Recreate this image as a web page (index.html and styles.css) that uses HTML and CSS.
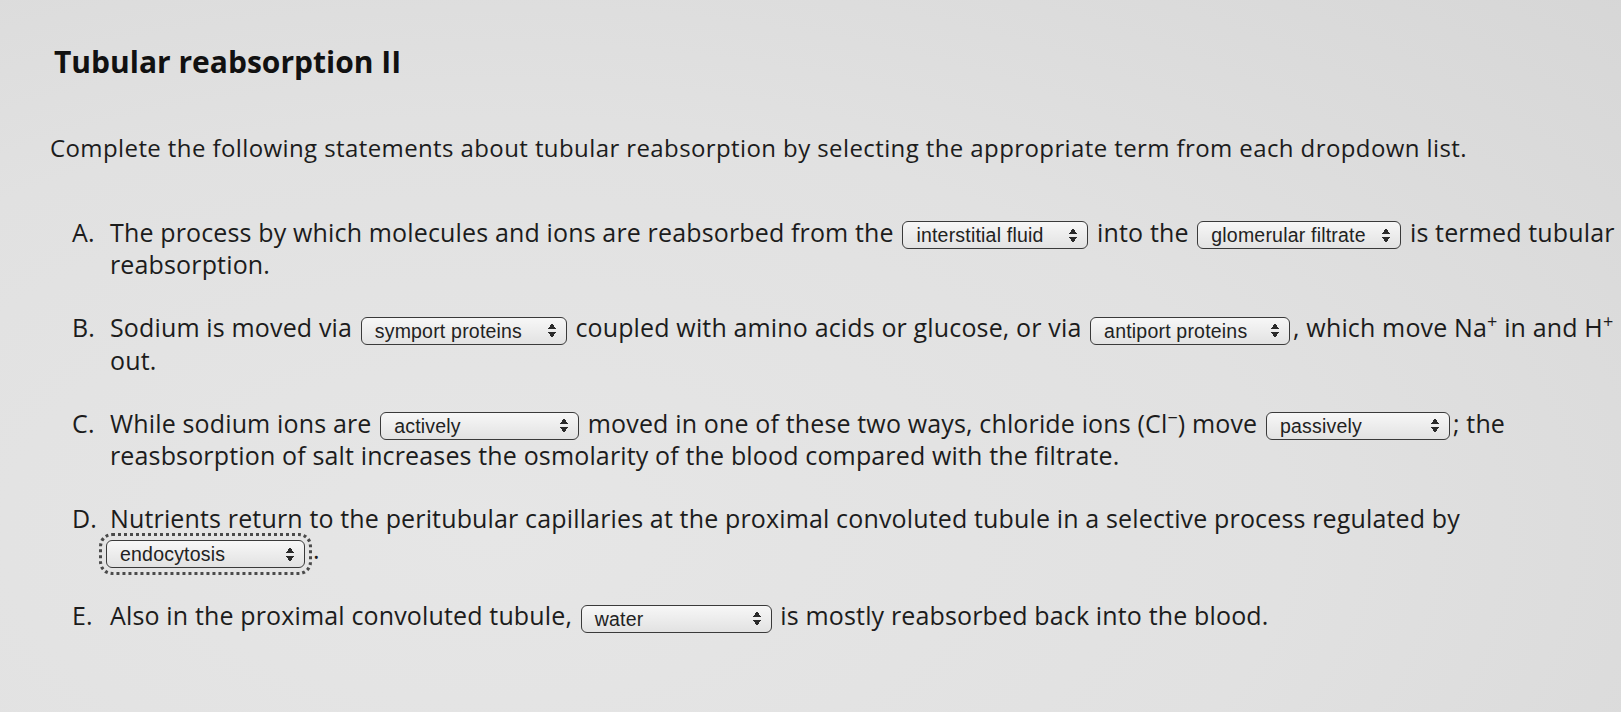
FILE: index.html
```html
<!DOCTYPE html>
<html lang="en">
  <head>
    <meta charset="UTF-8" />
    <meta name="viewport" content="width=device-width, initial-scale=1.0" />
    <title>Tubular reabsorption II</title>
    <link rel="stylesheet" href="styles.css">
  </head>
  <body>
    <div class="page">
      <h1>Tubular reabsorption II</h1>
      <p class="intro">
        Complete the following statements about tubular reabsorption by selecting the appropriate term from each dropdown list.
      </p>

      <div class="items">
        <div class="item">
          <span class="label">A.</span>
          <div class="text">
            The process by which molecules and ions are reabsorbed from the
            <span class="select w186">interstitial fluid</span>
            into the
            <span class="select w204">glomerular filtrate</span>
            is termed tubular<br />reabsorption.
          </div>
        </div>

        <div class="item">
          <span class="label">B.</span>
          <div class="text">
            Sodium is moved via
            <span class="select w206">symport proteins</span>
            coupled with amino acids or glucose, or via
            <span class="select w200">antiport proteins</span><span class="tight">, which move Na<sup>+</sup> in and H<sup>+</sup></span><br />out.
          </div>
        </div>

        <div class="item">
          <span class="label">C.</span>
          <div class="text">
            While sodium ions are
            <span class="select w199">actively</span>
            moved in one of these two ways, chloride ions (Cl<sup>&minus;</sup>) move
            <span class="select w184">passively</span><span class="tight">; the</span><br />reasbsorption of salt increases the osmolarity of the blood compared with the filtrate.
          </div>
        </div>

        <div class="item">
          <span class="label">D.</span>
          <div class="text">
            Nutrients return to the peritubular capillaries at the proximal convoluted tubule in a selective process regulated by<br />
            <span class="select focused w199">endocytosis</span><span class="dot">.</span>
          </div>
        </div>

        <div class="item">
          <span class="label">E.</span>
          <div class="text">
            Also in the proximal convoluted tubule,
            <span class="select w191">water</span>
            is mostly reabsorbed back into the blood.
          </div>
        </div>
      </div>
    </div>
  </body>
</html>
```

FILE: styles.css
```css
html {
  min-height: 100%;
  background: radial-gradient(
    110% 130% at 30% 75%,
    #e6e6e6 0%,
    #e1e1e1 45%,
    #d3d3d3 100%
  );
}

body {
  margin: 0;
  overflow: hidden;
  color: #1c1c1c;
  font-family: "Open Sans", Lato, sans-serif;
}

.page {
  width: 1800px;
  padding: 44px 0 0 50px;
}

h1 {
  margin: 0 0 0 4px;
  font-size: 30px;
  line-height: 36px;
  font-weight: 700;
  color: #111;
}

.intro {
  margin: 53px 0 0 0;
  font-size: 24px;
  line-height: 30px;
  letter-spacing: 0.4px;
}

.items {
  display: flex;
  flex-direction: column;
  gap: 32px;
  margin-top: 54px;
  padding-left: 22px;
}

.item {
  display: flex;
  font-size: 25px;
  line-height: 31px;
  letter-spacing: 0.15px;
}

.label {
  width: 38px;
  flex-shrink: 0;
}

.text sup {
  font-size: 18px;
  line-height: 0;
  vertical-align: 9px;
}

.select {
  display: inline-flex;
  align-items: center;
  justify-content: space-between;
  box-sizing: border-box;
  height: 28px;
  padding: 0 10px 0 13px;
  margin: 0 2px;
  vertical-align: middle;
  border: 1.5px solid #3a3a3a;
  border-radius: 6px;
  background: linear-gradient(#f7f7f7, #e2e2e2);
  font-family: "Liberation Sans", Arial, sans-serif;
  font-size: 19.5px;
  line-height: 22px;
  letter-spacing: 0.2px;
  color: #222;
}

.select::after {
  content: "";
  width: 8px;
  height: 15px;
  background:
    linear-gradient(to bottom right, transparent 50%, #2a2a2a 50%) 0 0 / 50% 40% no-repeat,
    linear-gradient(to bottom left, transparent 50%, #2a2a2a 50%) 100% 0 / 50% 40% no-repeat,
    linear-gradient(to top right, transparent 50%, #2a2a2a 50%) 0 100% / 50% 40% no-repeat,
    linear-gradient(to top left, transparent 50%, #2a2a2a 50%) 100% 100% / 50% 40% no-repeat;
}

.tight {
  margin-left: 1px;
}

.focused {
  margin: 4px 0 0 -4px;
  outline: 3px dotted #4a4a4a;
  outline-offset: 4px;
}

.dot {
  margin-left: 8px;
}

.w184 { width: 184px; }
.w186 { width: 186px; }
.w191 { width: 191px; }
.w199 { width: 199px; }
.w200 { width: 200px; }
.w204 { width: 204px; }
.w206 { width: 206px; }
```
